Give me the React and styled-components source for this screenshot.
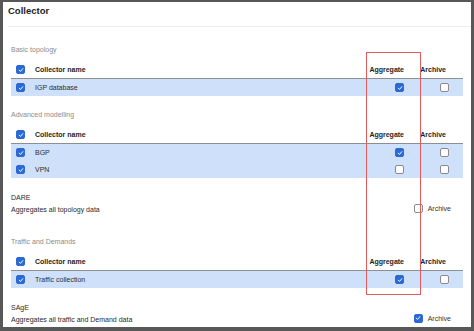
import styled, { createGlobalStyle } from "styled-components";

const GlobalStyle = createGlobalStyle`
  body {
    margin: 0;
    background: #585858;
    font-family: "Liberation Sans", Arial, sans-serif;
    -webkit-font-smoothing: antialiased;
  }
`;

const Frame = styled.div`
  width: 474px;
  height: 331px;
  box-sizing: border-box;
  padding: 2px 3px 4px 3px;
  background: #585858;
  overflow: hidden;
`;

const Panel = styled.div`
  position: relative;
  height: 100%;
  background: #fff;
  padding: 3px 0 0 5px;
  box-sizing: border-box;
  overflow: hidden;
`;

const Title = styled.div`
  font-size: 9.5px;
  line-height: 12px;
  font-weight: 700;
  color: #1e1e1e;
`;

const Divider = styled.div`
  height: 1px;
  background: #ededed;
  margin-top: 9px;
`;

const Body = styled.div`
  padding: 0 8px 0 3px;
`;

const SectionLabel = styled.div`
  margin-top: ${(p) => p.$top}px;
  font-size: 7px;
  line-height: 10px;
  color: #8b8b8b;
`;

const Table = styled.div`
  margin-top: 6px;
`;

const Row = styled.div`
  display: grid;
  grid-template-columns: 24px 1fr 54px 43px;
  align-items: center;
  height: 17px;
  font-size: 7px;
  color: ${(p) => (p.$head ? "#1e1e1e" : "#2e2e2e")};
  font-weight: ${(p) => (p.$head ? 700 : 400)};
  background: ${(p) => (p.$head ? "#fff" : "#cfe0fb")};
  border-bottom: ${(p) => (p.$head ? "1px solid #8e8e8e" : "none")};
`;

const Lead = styled.div`
  display: flex;
  padding-left: 5px;
`;

const Cell = styled.div`
  display: flex;
  justify-content: flex-end;
  padding-right: ${(p) => p.$pr}px;
`;

const Box = styled.span`
  display: inline-flex;
  align-items: center;
  justify-content: center;
  width: 9px;
  height: 9px;
  box-sizing: border-box;
  border-radius: 2px;
  background: ${(p) => (p.$on ? "#2c69d4" : "#fff")};
  border: 1px solid ${(p) => (p.$on ? "#2c69d4" : "#8a8a8a")};
`;

const Setting = styled.div`
  margin-top: ${(p) => p.$top}px;
  display: flex;
  justify-content: space-between;
  align-items: flex-end;
`;

const SettingText = styled.div`
  font-size: 7px;
  line-height: 11.5px;
  color: #2a2a2a;
`;

const ArchiveToggle = styled.label`
  display: flex;
  align-items: center;
  gap: 5px;
  padding-right: 12px;
  margin-bottom: 1px;
  font-size: 7px;
  line-height: 11.5px;
  color: #333;
`;

const Highlight = styled.div`
  position: absolute;
  left: 363px;
  top: 50px;
  width: 55px;
  height: 243px;
  border: 1.5px solid #e05b5b;
  box-sizing: border-box;
  pointer-events: none;
`;

function Check({ on }) {
  return (
    <Box $on={on}>
      {on && (
        <svg width="6" height="6" viewBox="0 0 10 10">
          <path
            d="M2 5.3 L4.2 7.4 L8 2.8"
            fill="none"
            stroke="#fff"
            strokeWidth="1.6"
            strokeLinecap="round"
            strokeLinejoin="round"
          />
        </svg>
      )}
    </Box>
  );
}

function CollectorTable({ rows }) {
  return (
    <Table>
      <Row $head>
        <Lead>
          <Check on />
        </Lead>
        <div>Collector name</div>
        <Cell $pr={16}>Aggregate</Cell>
        <Cell $pr={17}>Archive</Cell>
      </Row>
      {rows.map((r) => (
        <Row key={r.name}>
          <Lead>
            <Check on />
          </Lead>
          <div>{r.name}</div>
          <Cell $pr={16}>
            <Check on={r.aggregate} />
          </Cell>
          <Cell $pr={14}>
            <Check on={r.archive} />
          </Cell>
        </Row>
      ))}
    </Table>
  );
}

function SettingBlock({ top, name, text, archive }) {
  return (
    <Setting $top={top}>
      <SettingText>
        <div>{name}</div>
        <div>{text}</div>
      </SettingText>
      <ArchiveToggle>
        <Check on={archive} />
        Archive
      </ArchiveToggle>
    </Setting>
  );
}

export default function App() {
  return (
    <>
      <GlobalStyle />
      <Frame>
        <Panel>
          <Title>Collector</Title>
          <Divider />
          <Body>
            <SectionLabel $top={18}>Basic topology</SectionLabel>
            <CollectorTable
              rows={[{ name: "IGP database", aggregate: true, archive: false }]}
            />

            <SectionLabel $top={14}>Advanced modelling</SectionLabel>
            <CollectorTable
              rows={[
                { name: "BGP", aggregate: true, archive: false },
                { name: "VPN", aggregate: false, archive: false },
              ]}
            />

            <SettingBlock
              top={14}
              name="DARE"
              text="Aggregates all topology data"
              archive={false}
            />

            <SectionLabel $top={22}>Traffic and Demands</SectionLabel>
            <CollectorTable
              rows={[
                { name: "Traffic collection", aggregate: true, archive: false },
              ]}
            />

            <SettingBlock
              top={14}
              name="SAgE"
              text="Aggregates all traffic and Demand data"
              archive
            />
          </Body>
          <Highlight />
        </Panel>
      </Frame>
    </>
  );
}
